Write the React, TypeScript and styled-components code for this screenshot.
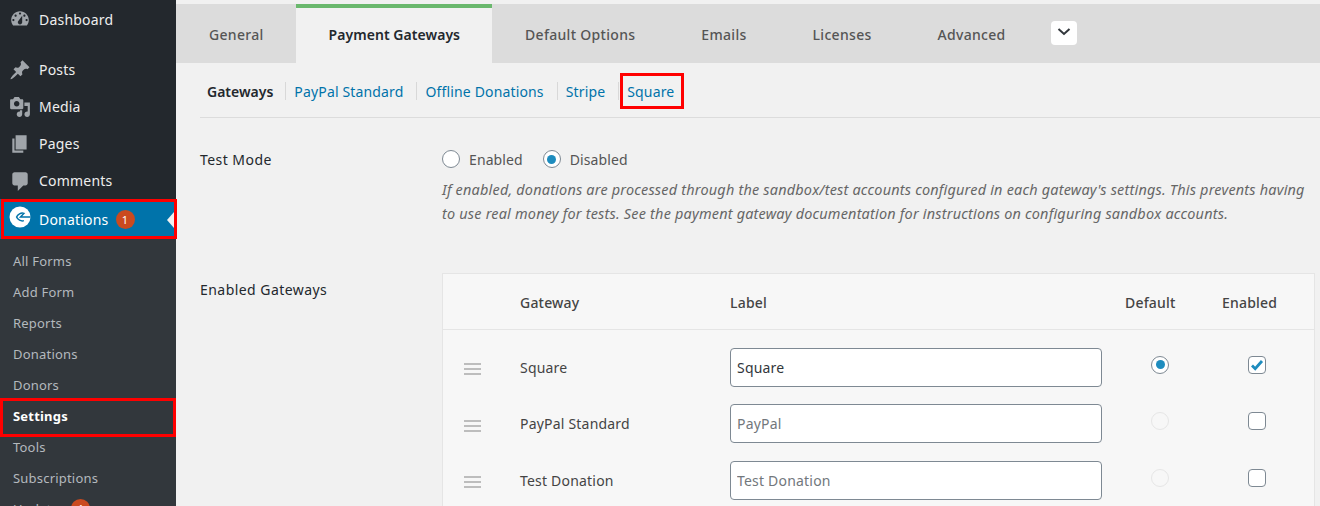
import styled, { createGlobalStyle } from "styled-components";

const GlobalStyle = createGlobalStyle`
  html, body {
    margin: 0;
    padding: 0;
    height: 506px;
    overflow: hidden;
    background: #f1f1f1;
    font-family: "Noto Sans", "Open Sans", sans-serif;
    font-size: 14px;
    letter-spacing: 0.2px;
    color: #444;
  }
  * { box-sizing: border-box; }
`;

const Layout = styled.div`
  display: flex;
  width: 1320px;
  height: 506px;
  overflow: hidden;
`;

const Sidebar = styled.nav`
  width: 176px;
  flex-shrink: 0;
  background: #23282d;
  height: 506px;
  position: relative;
  z-index: 1;
`;

const MenuList = styled.div`
  display: flex;
  flex-direction: column;
`;

const MenuItem = styled.div`
  height: 37px;
  display: flex;
  align-items: center;
  gap: 8px;
  padding-left: 9px;
  color: #eee;
  font-size: 14px;
`;

const DashboardItem = styled(MenuItem)`
  height: 38px;
  margin-bottom: 13px;
`;

const IconSlot = styled.span`
  width: 22px;
  height: 22px;
  display: flex;
  align-items: center;
  justify-content: center;
  color: #a0a5aa;
`;

const GiveSlot = styled(IconSlot)`
  margin-top: -4px;
`;

const ActiveItem = styled(MenuItem)`
  height: 40px;
  position: relative;
  background: #0073aa;
  color: #fff;
`;

const RedBox = styled.span<{ $top: number; $left: number; $right: number; $bottom: number }>`
  position: absolute;
  top: ${(p) => p.$top}px;
  left: ${(p) => p.$left}px;
  right: ${(p) => p.$right}px;
  bottom: ${(p) => p.$bottom}px;
  border: 3px solid #f00;
  pointer-events: none;
`;

const Badge = styled.span`
  width: 19px;
  height: 19px;
  border-radius: 50%;
  background: #ca4a1f;
  color: #fff;
  font-size: 11px;
  display: inline-flex;
  align-items: center;
  justify-content: center;
  margin-left: 6px;
`;

const ActiveBadge = styled(Badge)`
  margin-left: -1px;
`;

const ActiveArrow = styled.span`
  position: absolute;
  right: 2px;
  top: 13px;
  width: 0;
  height: 0;
  border: 8px solid transparent;
  border-right: 7px solid #f1f1f1;
  border-left-width: 0;
`;

const SubMenu = styled.div`
  background: #32373c;
  padding-top: 6px;
  height: 267px;
  overflow: hidden;
  display: flex;
  flex-direction: column;
`;

const SubItem = styled.div<{ $current?: boolean }>`
  height: 31px;
  flex-shrink: 0;
  position: relative;
  display: flex;
  align-items: center;
  padding-left: 13px;
  font-size: 13px;
  color: ${(p) => (p.$current ? "#fff" : "#b4b9be")};
  font-weight: ${(p) => (p.$current ? 700 : 400)};
`;

const Main = styled.main`
  flex: 1;
  min-width: 0;
  padding-top: 4px;
`;

const TabBar = styled.div`
  height: 59px;
  background: #dcdcdc;
  display: flex;
  align-items: stretch;
  font-size: 14px;
`;

const Tab = styled.div<{ $active?: boolean }>`
  display: flex;
  align-items: center;
  padding: 0 ${(p) => (p.$active ? 32 : 33)}px 2px 33px;
  color: ${(p) => (p.$active ? "#23282d" : "#555")};
  font-weight: ${(p) => (p.$active ? 600 : 500)};
  letter-spacing: ${(p) => (p.$active ? 0.05 : 0.3)}px;
  background: ${(p) => (p.$active ? "#f1f1f1" : "transparent")};
  border-top: 4px solid ${(p) => (p.$active ? "#6ab86d" : "transparent")};

  &:first-child {
    padding-right: 32px;
  }
`;

const MoreButton = styled.button`
  width: 26px;
  height: 24px;
  margin: 17px 0 0 12px;
  background: #fff;
  border: none;
  border-radius: 4px;
  padding: 0 0 3px;
  display: flex;
  align-items: center;
  justify-content: center;
  color: #32373c;
`;

const SubNav = styled.div`
  height: 55px;
  margin-left: 24px;
  padding-top: 2px;
  display: flex;
  align-items: center;
  border-bottom: 1px solid #dcdcdc;
  font-size: 14px;
`;

const SubCurrent = styled.span`
  color: #23282d;
  font-weight: 600;
  letter-spacing: 0;
  padding: 0 12px 0 7px;
`;

const SubLink = styled.span`
  color: #0073aa;
  letter-spacing: 0.15px;
  height: 18px;
  display: flex;
  align-items: center;
  position: relative;
  padding: 0 13px 0 8px;
  border-left: 1px solid #d8d8d8;
`;

const Row = styled.div`
  display: flex;
  margin-left: 24px;
`;

const RowLabel = styled.div`
  width: 242px;
  flex-shrink: 0;
  color: #23282d;
  letter-spacing: 0.45px;
  padding-top: 7px;
`;

const TestLabel = styled(RowLabel)`
  padding-top: 0;
`;

const TestRow = styled(Row)`
  padding-top: 32px;
  height: 155px;
`;

const RadioLine = styled.div`
  display: flex;
  align-items: center;
  height: 18px;
  gap: 9px;
  color: #555;
  letter-spacing: 0.1px;
`;

const Radio = styled.span<{ $on?: boolean; $disabled?: boolean }>`
  width: 18px;
  height: 18px;
  border-radius: 50%;
  border: 1px solid ${(p) => (p.$disabled ? "#e6e6e6" : "#7e8993")};
  background: ${(p) => (p.$disabled ? "transparent" : "#fff")};
  display: inline-flex;
  align-items: center;
  justify-content: center;
  &::after {
    content: "";
    display: ${(p) => (p.$on ? "block" : "none")};
    width: 9px;
    height: 9px;
    border-radius: 50%;
    background: #1e8cbe;
  }
`;

const RadioGap = styled.span`
  width: 2px;
`;

const Help = styled.p`
  margin: 10px 0 0;
  font-style: italic;
  color: #666;
  line-height: 24px;
  width: 872px;
  font-size: 14.45px;
`;

const GatewayPanel = styled.div`
  width: 873px;
  height: 300px;
  background: #f7f7f7;
  border: 1px solid #e5e5e5;
`;

const TableHead = styled.div`
  height: 56px;
  padding-top: 2px;
  display: grid;
  grid-template-columns: 77px 210px 395px 97px 1fr;
  align-items: center;
  border-bottom: 1px solid #e5e5e5;
  color: #444;
  font-weight: 500;
`;

const TableBody = styled.div`
  padding-top: 9px;
`;

const TableRow = styled.div`
  display: grid;
  grid-template-columns: 77px 210px 372px 116px 78px 1fr;
  align-items: center;
  height: 56.5px;
`;

const Handle = styled.span`
  margin-left: 21px;
  width: 17px;
  height: 12px;
  margin-top: 4px;
  border-top: 2px solid #bdbdbd;
  border-bottom: 2px solid #bdbdbd;
  position: relative;
  &::after {
    content: "";
    position: absolute;
    left: 0;
    right: 0;
    top: 3px;
    height: 2px;
    background: #bdbdbd;
  }
`;

const LabelInput = styled.input`
  width: 372px;
  height: 39px;
  border: 1px solid #7e8993;
  border-radius: 4px;
  background: #fff;
  padding: 0 6px;
  font: inherit;
  letter-spacing: inherit;
  color: #32373c;
  outline: none;
  &::placeholder {
    color: #72777c;
    opacity: 1;
  }
`;

const CellCenter = styled.div`
  display: flex;
  justify-content: center;
  margin-top: -5px;
`;

const Check = styled.span`
  width: 18px;
  height: 18px;
  border: 1px solid #7e8993;
  border-radius: 4px;
  background: #fff;
  display: inline-flex;
  align-items: center;
  justify-content: center;
  color: #1e8cbe;
`;

const PinIcon = () => (
  <svg width="22" height="22" viewBox="0 0 20 20" fill="currentColor">
    <path d="M10.44 3.02l1.82-1.82 6.36 6.35-1.83 1.82c-1.05-.68-2.48-.57-3.41.36l-.75.75c-.92.93-1.04 2.35-.35 3.41l-1.83 1.82-2.41-2.41-2.8 2.79c-.42.42-3.38 2.71-3.8 2.29s1.86-3.39 2.28-3.81l2.79-2.79L4.1 9.36l1.83-1.82c1.05.69 2.48.57 3.4-.36l.75-.75c.93-.92 1.05-2.35.36-3.41z" />
  </svg>
);

const DashIcon = () => (
  <svg width="22" height="22" viewBox="0 0 20 20" fill="currentColor">
    <path d="M3.76 16h12.48c1.1-1.37 1.76-3.11 1.76-5 0-4.42-3.58-8-8-8s-8 3.58-8 8c0 1.89.66 3.63 1.76 5zM10 4c.55 0 1 .45 1 1s-.45 1-1 1-1-.45-1-1 .45-1 1-1zM6 6c.55 0 1 .45 1 1s-.45 1-1 1-1-.45-1-1 .45-1 1-1zm8 0c.55 0 1 .45 1 1s-.45 1-1 1-1-.45-1-1 .45-1 1-1zm-5.37 5.55L12 7v6c0 1.1-.9 2-2 2s-2-.9-2-2c0-.57.24-1.08.63-1.45zM4 10c.55 0 1 .45 1 1s-.45 1-1 1-1-.45-1-1 .45-1 1-1zm12 0c.55 0 1 .45 1 1s-.45 1-1 1-1-.45-1-1 .45-1 1-1z" />
  </svg>
);

const MediaIcon = () => (
  <svg width="22" height="22" viewBox="0 0 20 20" fill="currentColor">
    <path d="M13 11V4c0-.55-.45-1-1-1h-1.67L9 1H5L3.67 3H2c-.55 0-1 .45-1 1v7c0 .55.45 1 1 1h10c.55 0 1-.45 1-1zM7 4.5c1.38 0 2.5 1.12 2.5 2.5S8.38 9.5 7 9.5 4.5 8.38 4.5 7 5.62 4.5 7 4.5zM14 6h5v10.5c0 1.38-1.12 2.5-2.5 2.5S14 17.88 14 16.5s1.12-2.5 2.5-2.5c.17 0 .34.02.5.05V9h-3V6zm-4 8.05V13h2v3.5c0 1.38-1.12 2.5-2.5 2.5S7 17.88 7 16.5 8.12 14 9.5 14c.17 0 .34.02.5.05z" />
  </svg>
);

const PagesIcon = () => (
  <svg width="22" height="22" viewBox="0 0 20 20" fill="currentColor">
    <path d="M6 15V2h10v13H6zm-1 1h8v2H3V5h2v11z" />
  </svg>
);

const CommentsIcon = () => (
  <svg width="22" height="22" viewBox="0 0 20 20" fill="currentColor">
    <path d="M5 2h10c1.1 0 2 .9 2 2v8c0 1.1-.9 2-2 2h-2l-5 5v-5H5c-1.1 0-2-.9-2-2V4c0-1.1.9-2 2-2z" />
  </svg>
);

const GiveIcon = () => (
  <svg width="22" height="22" viewBox="0 0 22 22">
    <circle cx="11" cy="11" r="10.5" fill="#fff" />
    <path d="M21.5 11H11.5l3.4-3.6C12 6.4 8.6 8.4 7.6 11c1 2.6 4.4 4.6 7.3 3.6" fill="none" stroke="#0073aa" strokeWidth="1.5" />
  </svg>
);

const Chevron = () => (
  <svg width="14" height="10" viewBox="0 0 14 10" fill="none" stroke="currentColor" strokeWidth="2">
    <path d="M1.5 2L7 7l5.5-5" />
  </svg>
);

const CheckMark = () => (
  <svg width="14" height="14" viewBox="0 0 14 14" fill="none" stroke="currentColor" strokeWidth="2.8">
    <path d="M2 7.5l3.2 3.2L12 3" />
  </svg>
);

const tabs = [
  { label: "General" },
  { label: "Payment Gateways", active: true },
  { label: "Default Options" },
  { label: "Emails" },
  { label: "Licenses" },
  { label: "Advanced" },
];

const gateways = [
  { name: "Square", value: "Square", on: true },
  { name: "PayPal Standard", placeholder: "PayPal" },
  { name: "Test Donation", placeholder: "Test Donation" },
];

export default function App() {
  return (
    <Layout>
      <GlobalStyle />
      <Sidebar>
        <MenuList>
          <DashboardItem><IconSlot><DashIcon /></IconSlot>Dashboard</DashboardItem>
          <MenuItem><IconSlot><PinIcon /></IconSlot>Posts</MenuItem>
          <MenuItem><IconSlot><MediaIcon /></IconSlot>Media</MenuItem>
          <MenuItem><IconSlot><PagesIcon /></IconSlot>Pages</MenuItem>
          <MenuItem><IconSlot><CommentsIcon /></IconSlot>Comments</MenuItem>
          <ActiveItem>
            <GiveSlot><GiveIcon /></GiveSlot>
            Donations
            <ActiveBadge>1</ActiveBadge>
            <ActiveArrow />
            <RedBox $top={0} $left={1} $right={-1} $bottom={0} />
          </ActiveItem>
        </MenuList>
        <SubMenu>
          <SubItem>All Forms</SubItem>
          <SubItem>Add Form</SubItem>
          <SubItem>Reports</SubItem>
          <SubItem>Donations</SubItem>
          <SubItem>Donors</SubItem>
          <SubItem $current>
            Settings
            <RedBox $top={-2} $left={0} $right={0} $bottom={-6} />
          </SubItem>
          <SubItem>Tools</SubItem>
          <SubItem>Subscriptions</SubItem>
          <SubItem>Updates <Badge>1</Badge></SubItem>
        </SubMenu>
      </Sidebar>
      <Main>
        <TabBar>
          {tabs.map((t) => (
            <Tab key={t.label} $active={t.active}>{t.label}</Tab>
          ))}
          <MoreButton><Chevron /></MoreButton>
        </TabBar>
        <SubNav>
          <SubCurrent>Gateways</SubCurrent>
          <SubLink>PayPal Standard</SubLink>
          <SubLink>Offline Donations</SubLink>
          <SubLink>Stripe</SubLink>
          <SubLink>
            Square
            <RedBox $top={-9} $left={1} $right={3} $bottom={-9} />
          </SubLink>
        </SubNav>
        <TestRow>
          <TestLabel>Test Mode</TestLabel>
          <div>
            <RadioLine>
              <Radio />Enabled<RadioGap /><Radio $on />Disabled
            </RadioLine>
            <Help>
              If enabled, donations are processed through the sandbox/test accounts configured in each gateway's settings. This prevents having to use real money for tests. See the payment gateway documentation for instructions on configuring sandbox accounts.
            </Help>
          </div>
        </TestRow>
        <Row>
          <RowLabel>Enabled Gateways</RowLabel>
          <GatewayPanel>
            <TableHead>
              <span />
              <span>Gateway</span>
              <span>Label</span>
              <span>Default</span>
              <span>Enabled</span>
            </TableHead>
            <TableBody>
              {gateways.map((g) => (
                <TableRow key={g.name}>
                  <Handle />
                  <span>{g.name}</span>
                  <LabelInput readOnly value={g.value ?? ""} placeholder={g.placeholder} />
                  <CellCenter><Radio $on={g.on} $disabled={!g.on} /></CellCenter>
                  <CellCenter><Check>{g.on && <CheckMark />}</Check></CellCenter>
                </TableRow>
              ))}
            </TableBody>
          </GatewayPanel>
        </Row>
      </Main>
    </Layout>
  );
}
